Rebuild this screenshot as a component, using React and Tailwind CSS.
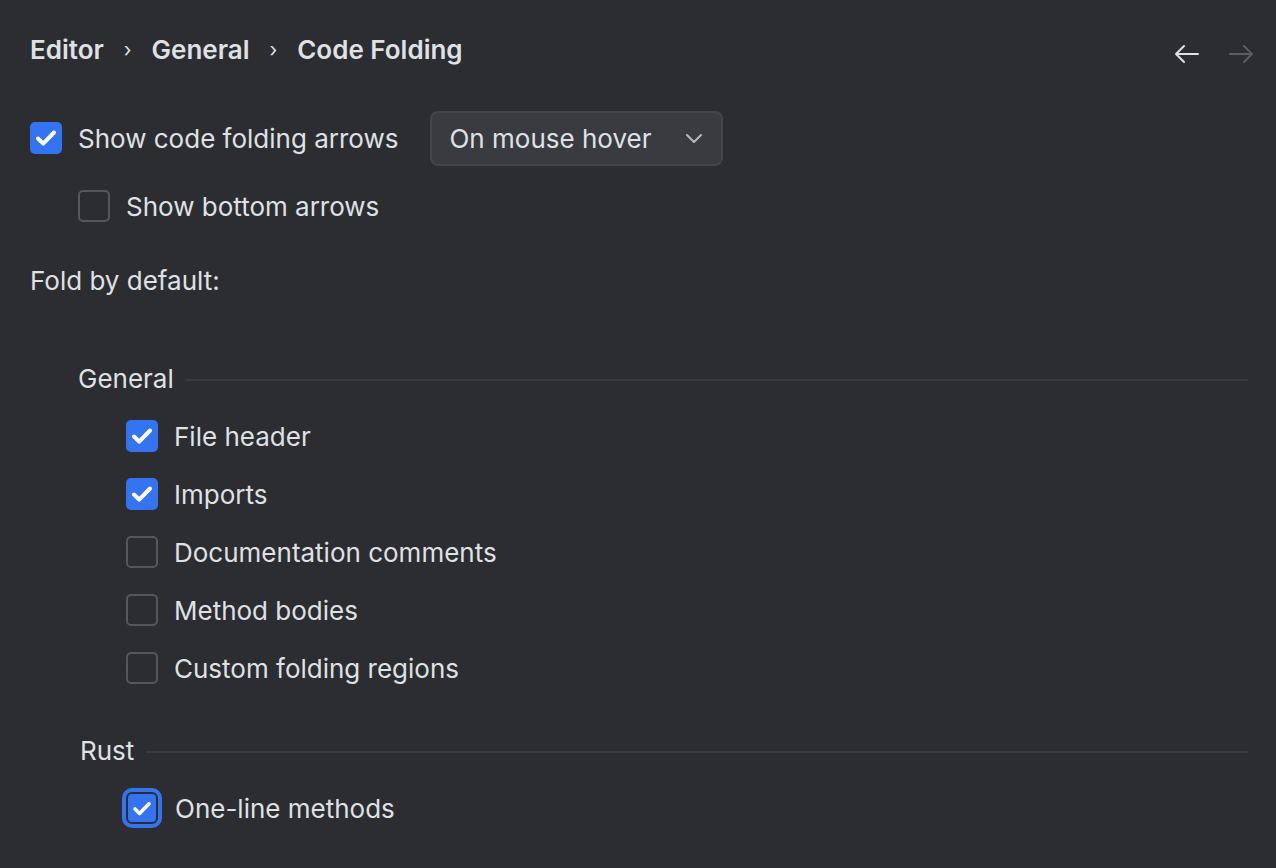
import React from "react";

const Check = ({ size = 32 }) => (
  <svg width={size} height={size} viewBox="0 0 32 32" fill="none">
    <path d="M8 16.5 L13.2 21.7 L24 10.5" stroke="white" strokeWidth="4" strokeLinecap="round" strokeLinejoin="round" />
  </svg>
);

function Box({ checked, focused }) {
  if (focused) {
    return (
      <div className="w-8 h-8 shrink-0 rounded-[6px] bg-[#3574f0] border-2 border-[#2b2d30] ring-4 ring-[#3574f0] flex items-center justify-center">
        <Check size={29} />
      </div>
    );
  }
  if (checked) {
    return (
      <div className="w-8 h-8 shrink-0 rounded-[5px] bg-[#3574f0] flex items-center justify-center">
        <Check />
      </div>
    );
  }
  return <div className="w-8 h-8 shrink-0 rounded-[5px] border-2 border-[#54575c]" />;
}

function Row({ checked, focused, label, className = "" }) {
  return (
    <div className={"flex items-center gap-4 h-[58px] " + className}>
      <Box checked={checked} focused={focused} />
      <span>{label}</span>
    </div>
  );
}

function Group({ title, children, className = "" }) {
  return (
    <div className={className}>
      <div className="flex items-center gap-3 h-[40px]">
        <span>{title}</span>
        <div className="flex-1 h-[2px] bg-[#393b40] mt-1" />
      </div>
      <div className="pl-12">{children}</div>
    </div>
  );
}

export default function App() {
  return (
    <div
      className="w-[1276px] h-[868px] bg-[#2b2d30] text-[#dfe1e5] text-[26px] overflow-hidden"
      style={{ fontFamily: "Inter, 'Noto Sans', sans-serif" }}
    >
      <div className="flex items-center justify-between pl-[30px] pr-[22px] pt-[29px] h-[70px]">
        <div className="flex items-center font-semibold text-[26px] text-[#dfe1e5]">
          <span>Editor</span>
          <span className="mx-[20px] font-normal text-[20px] text-[#dfe1e5]">›</span>
          <span>General</span>
          <span className="mx-[20px] font-normal text-[20px] text-[#dfe1e5]">›</span>
          <span>Code Folding</span>
        </div>
        <div className="flex items-center gap-[28px] mt-[8px]">
          <svg width="26" height="20" viewBox="0 0 26 20" fill="none">
            <path d="M24 10 H2 M10 2 L2 10 L10 18" stroke="#dfe1e5" strokeWidth="2" strokeLinecap="round" strokeLinejoin="round" />
          </svg>
          <svg width="26" height="20" viewBox="0 0 26 20" fill="none">
            <path d="M2 10 H24 M16 2 L24 10 L16 18" stroke="#5a5d63" strokeWidth="2" strokeLinecap="round" strokeLinejoin="round" />
          </svg>
        </div>
      </div>

      <div className="pl-[30px] pr-7 pt-[40px]">
        <div className="flex items-center h-[56px]">
          <Box checked />
          <span className="ml-4">Show code folding arrows</span>
          <div className="ml-8 w-[293px] h-[55px] rounded-[8px] border-2 border-[#43454a] bg-[#393b40] flex items-center justify-between pl-[17px] pr-[18px]">
            <span>On mouse hover</span>
            <svg width="18" height="12" viewBox="0 0 18 12" fill="none">
              <path d="M2 3 L9 10 L16 3" stroke="#b4b8bf" strokeWidth="2" strokeLinecap="round" strokeLinejoin="round" />
            </svg>
          </div>
        </div>
        <Row label="Show bottom arrows" className="ml-12 mt-[4px] h-[72px]" />
        <div className="h-[68px] flex items-center mt-[4px]">Fold by default:</div>

        <Group title="General" className="ml-12 mt-[44px]">
          <Row checked label="File header" className="mt-[9px]" />
          <Row checked label="Imports" />
          <Row label="Documentation comments" />
          <Row label="Method bodies" />
          <Row label="Custom folding regions" />
        </Group>

        <Group title={<span className="ml-[2px]">Rust</span>} className="ml-12 mt-[33px]">
          <Row checked focused label={<span className="ml-[1px]">One-line methods</span>} className="mt-[9px]" />
        </Group>
      </div>
    </div>
  );
}
